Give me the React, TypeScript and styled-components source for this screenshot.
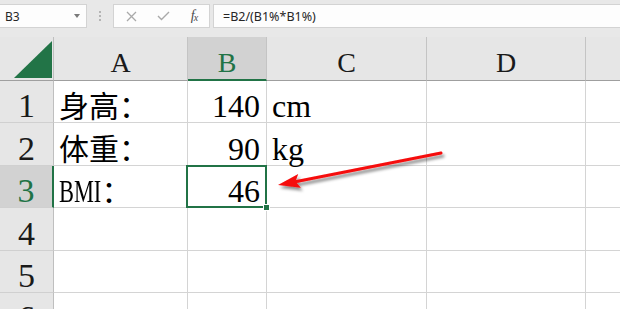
import React from 'react';
import styled, { createGlobalStyle } from 'styled-components';

const GREEN = '#217346';

const Global = createGlobalStyle`
  html, body { margin: 0; padding: 0; background: #e8e8e8; overflow: hidden; }
  #root { width: 620px; height: 309px; }
`;

const Page = styled.div`
  position: relative;
  width: 620px;
  height: 309px;
  overflow: hidden;
  background: #e8e8e8;
  font-family: "Liberation Serif", "Noto Sans CJK SC", serif;
`;

const Toolbar = styled.div`
  display: flex;
  align-items: flex-start;
  height: 37px;
  box-sizing: border-box;
  padding-top: 4px;
  background: #e8e8e8;
  font-family: "Noto Sans", "Open Sans", sans-serif;
`;

const FieldBox = styled.div`
  height: 24px;
  box-sizing: border-box;
  background: #fdfdfd;
  border: 1px solid #d3d3d3;
  display: flex;
  align-items: center;
  font-size: 12px;
  color: #262626;
`;

const NameBox = styled(FieldBox)`
  width: 88px;
  margin-left: -1px;
  justify-content: space-between;
  padding: 0 6px 0 5px;
`;

const Caret = styled.span`
  width: 0;
  height: 0;
  border-left: 3.5px solid transparent;
  border-right: 3.5px solid transparent;
  border-top: 4px solid #7a7a7a;
`;

const Grip = styled.div`
  width: 26px;
  height: 24px;
  display: flex;
  flex-direction: column;
  align-items: center;
  justify-content: center;
  gap: 2px;
`;

const GripDot = styled.span`
  width: 2px;
  height: 2px;
  background: #b4b4b4;
`;

const FxBox = styled(FieldBox)`
  width: 97px;
  display: grid;
  grid-template-columns: 34px 31px 30px;
  justify-items: center;
`;

const FxLabel = styled.span`
  font-family: "Liberation Serif", serif;
  font-style: italic;
  font-size: 14px;
  color: #4a4a4a;
  letter-spacing: -1px;
  & sub {
    font-size: 10px;
    vertical-align: -1px;
  }
`;

const FormulaBox = styled(FieldBox)`
  flex: 1;
  margin-left: 3px;
  margin-right: -2px;
  padding-left: 9px;
  font-size: 12.5px;
`;

const Sheet = styled.div`
  display: grid;
  grid-template-columns: 54px 134px 79px 160px 159px 60px;
  grid-template-rows: 44px repeat(6, 42.4px);
  background: #ffffff;
`;

const Corner = styled.div`
  background: #e6e6e6;
  border-right: 1px solid #bfbfbf;
  border-bottom: 1px solid #9f9f9f;
  display: flex;
  justify-content: flex-end;
  align-items: flex-end;
  padding: 0 1px 2px 0;
`;

const ColHead = styled.div<{ $sel?: boolean }>`
  background: ${(p) => (p.$sel ? '#d2d2d2' : '#e6e6e6')};
  border-right: 1px solid #c4c4c4;
  border-bottom: ${(p) => (p.$sel ? `2px solid ${GREEN}` : '1px solid #9f9f9f')};
  color: ${(p) => (p.$sel ? GREEN : '#1a1a1a')};
  display: flex;
  justify-content: center;
  align-items: flex-end;
  padding-bottom: ${(p) => (p.$sel ? '2px' : '3px')};
  font-size: 28px;
  line-height: 28px;
`;

const RowHead = styled.div<{ $sel?: boolean }>`
  background: ${(p) => (p.$sel ? '#d2d2d2' : '#e6e6e6')};
  border-right: ${(p) => (p.$sel ? `2px solid ${GREEN}` : '1px solid #bfbfbf')};
  border-bottom: 1px solid #d0d0d0;
  color: ${(p) => (p.$sel ? GREEN : '#1a1a1a')};
  display: flex;
  justify-content: center;
  align-items: flex-end;
  font-size: 34px;
  line-height: 32px;
`;

const Cell = styled.div<{ $right?: boolean; $sel?: boolean }>`
  position: relative;
  border-right: 1px solid #d4d4d4;
  border-bottom: 1px solid #d4d4d4;
  display: flex;
  justify-content: ${(p) => (p.$right ? 'flex-end' : 'flex-start')};
  align-items: flex-end;
  padding: 0 6px 0 5px;
  font-size: 32px;
  line-height: 32px;
  color: #000;
  white-space: nowrap;
  ${(p) =>
    p.$sel &&
    `
    &::after {
      content: '';
      position: absolute;
      top: -1px;
      left: -2px;
      right: -1px;
      bottom: -1px;
      border: 2px solid ${GREEN};
    }
  `}
`;

const FillHandle = styled.span`
  position: absolute;
  right: -4px;
  bottom: -4px;
  width: 5px;
  height: 5px;
  background: ${GREEN};
  border: 1px solid #ffffff;
  z-index: 2;
`;

const Value = styled.span`
  display: block;
`;

const Cjk = styled.span`
  font-family: "Noto Sans CJK SC", sans-serif;
  font-size: 30px;
`;

const Narrow = styled.span`
  display: inline-block;
  transform: scaleX(0.7);
  transform-origin: left bottom;
  margin-right: -18px;
`;

const Overlay = styled.svg`
  position: absolute;
  left: 0;
  top: 0;
  pointer-events: none;
`;

type Row = { n: number; a?: React.ReactNode; b?: string; c?: string; sel?: boolean };

const rows: Row[] = [
  { n: 1, a: <Cjk>身高：</Cjk>, b: '140', c: 'cm' },
  { n: 2, a: <Cjk>体重：</Cjk>, b: '90', c: 'kg' },
  {
    n: 3,
    a: (
      <>
        <Narrow>BMI</Narrow>
        <Cjk>：</Cjk>
      </>
    ),
    b: '46',
    sel: true,
  },
  { n: 4 },
  { n: 5 },
  { n: 6 },
];

export default function App() {
  return (
    <Page>
      <Global />
      <Toolbar>
        <NameBox>
          B3
          <Caret />
        </NameBox>
        <Grip>
          <GripDot />
          <GripDot />
          <GripDot />
        </Grip>
        <FxBox>
          <svg width="11" height="11" viewBox="0 0 11 11">
            <path d="M1 1 L10 10 M10 1 L1 10" stroke="#a9a9a9" strokeWidth="1.3" fill="none" />
          </svg>
          <svg width="13" height="10" viewBox="0 0 13 10">
            <path d="M1 5 L4.5 8.5 L12 1" stroke="#a9a9a9" strokeWidth="1.4" fill="none" />
          </svg>
          <FxLabel>
            f<sub>x</sub>
          </FxLabel>
        </FxBox>
        <FormulaBox>=B2/(B1%*B1%)</FormulaBox>
      </Toolbar>
      <Sheet>
        <Corner>
          <svg width="38" height="37" viewBox="0 0 38 37">
            <polygon points="0,37 38,37 38,0" fill="#227447" />
          </svg>
        </Corner>
        <ColHead>A</ColHead>
        <ColHead $sel>B</ColHead>
        <ColHead>C</ColHead>
        <ColHead>D</ColHead>
        <ColHead />
        {rows.map((r) => (
          <React.Fragment key={r.n}>
            <RowHead $sel={r.sel}>{r.n}</RowHead>
            <Cell>
              <Value>{r.a}</Value>
            </Cell>
            <Cell $right $sel={r.sel}>
              <Value>{r.b}</Value>
              {r.sel && <FillHandle />}
            </Cell>
            <Cell>
              <Value>{r.c}</Value>
            </Cell>
            <Cell />
            <Cell />
          </React.Fragment>
        ))}
      </Sheet>
      <Overlay width="620" height="309" viewBox="0 0 620 309">
        <defs>
          <filter id="shadow" x="-10%" y="-50%" width="130%" height="250%">
            <feDropShadow dx="2" dy="3" stdDeviation="1.6" floodColor="#000" floodOpacity="0.45" />
          </filter>
        </defs>
        <g filter="url(#shadow)">
          <line x1="441" y1="153" x2="294" y2="182" stroke="#f50a0a" strokeWidth="3" strokeLinecap="round" />
          <path d="M278 185 L298.2 173.9 L295.5 181.6 L300.9 187.7 Z" fill="#f50a0a" />
        </g>
      </Overlay>
    </Page>
  );
}
